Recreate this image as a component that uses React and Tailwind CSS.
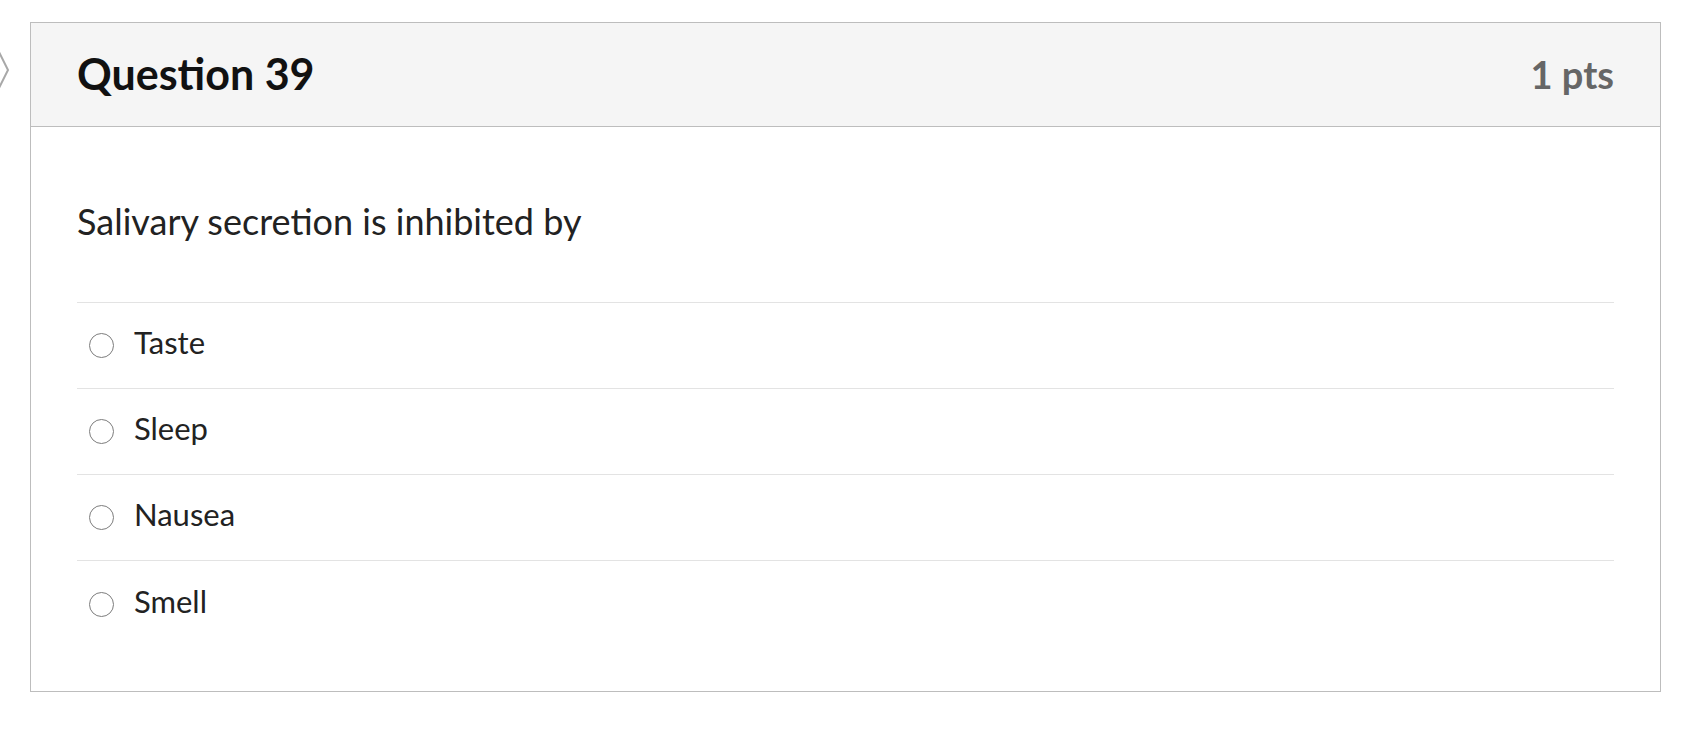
import React from 'react';

const options = ['Taste', 'Sleep', 'Nausea', 'Smell'];

const Radio = () => (
  <span className="w-[25px] h-[25px] rounded-full border-[1.5px] border-[#7d7d7d] bg-white shrink-0" />
);

export default function App() {
  return (
    <div className="w-[1688px] h-[732px] bg-white flex items-start pt-[22px]" style={{ fontFamily: 'Lato, "Noto Sans", sans-serif' }}>
      <div className="w-[30px] shrink-0 flex items-start pt-[26px]">
        <svg width="12" height="44" viewBox="0 0 12 44" className="-ml-[2px]">
          <path d="M1 4 L10 22 L1 40" fill="none" stroke="#a8a8a8" strokeWidth="2" />
        </svg>
      </div>
      <div className="w-[1631px] border-[1.5px] border-[#bdbdbd] flex flex-col">
        <div className="h-[104px] bg-[#f5f5f5] border-b-[1.5px] border-[#bdbdbd] flex items-center justify-between pl-[46px] pr-[46px]">
          <h2 className="text-[43px] font-bold text-[#111]">Question 39</h2>
          <span className="text-[38px] font-bold text-[#666]">1 pts</span>
        </div>
        <div className="px-[46px] pt-[76px] pb-[44px]">
          <p className="text-[36px] text-[#222] leading-none">Salivary secretion is inhibited by</p>
          <div className="mt-[63px] border-t-[1.5px] border-[#e3e3e3]">
            {options.map((o, i) => (
              <div
                key={o}
                className={`h-[86px] flex items-center gap-[20px] pl-[12px] ${i < options.length - 1 ? 'border-b-[1.5px] border-[#e3e3e3]' : ''}`}
              >
                <Radio />
                <span className="text-[31px] text-[#222] leading-none pb-[6px]">{o}</span>
              </div>
            ))}
          </div>
        </div>
      </div>
    </div>
  );
}
